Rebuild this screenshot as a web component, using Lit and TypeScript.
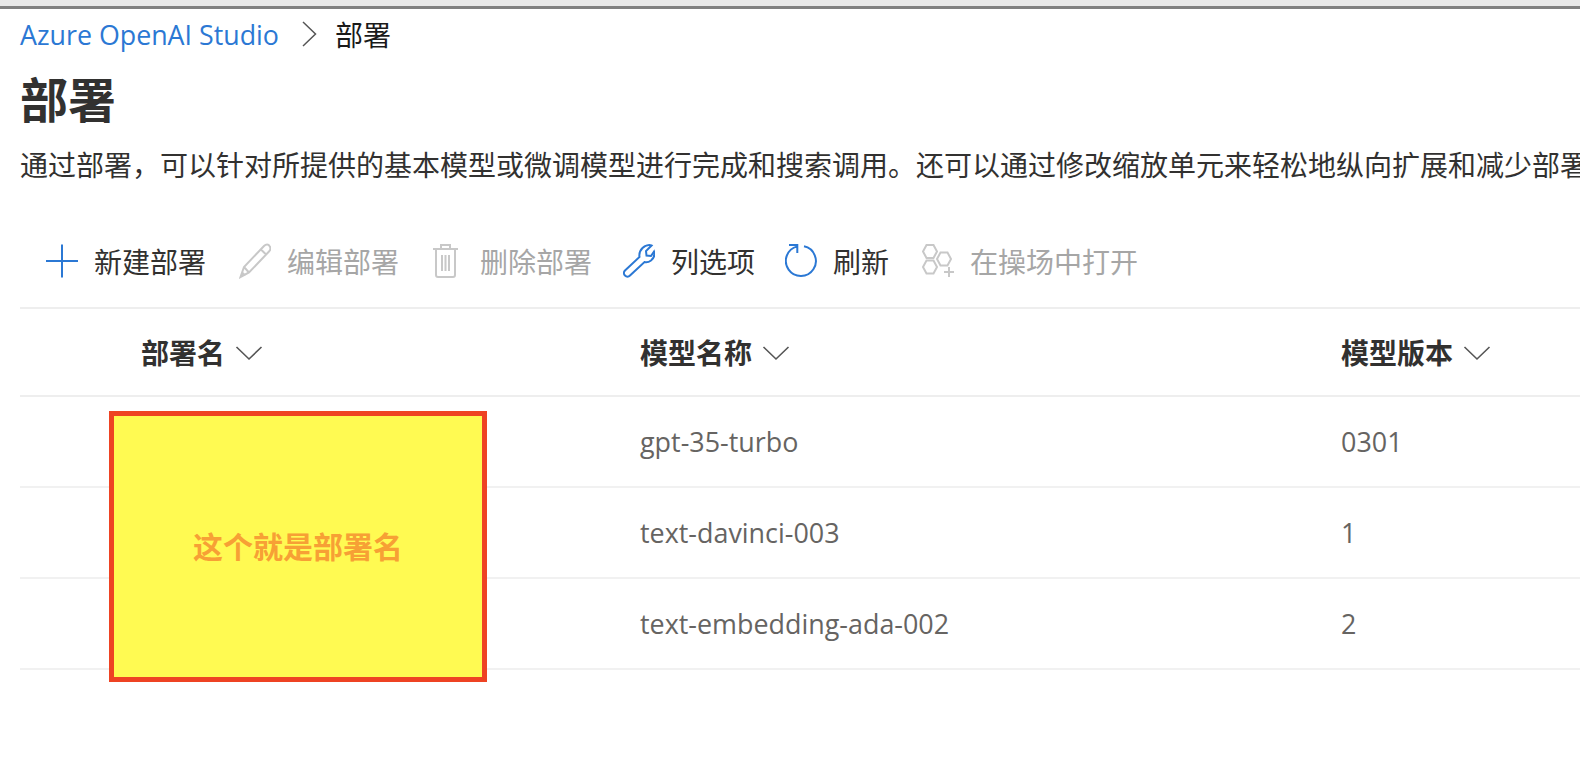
import { LitElement, html, css } from "lit";
import { customElement } from "lit/decorators.js";

const chev = html`<svg class="chev" viewBox="0 0 28 16" width="28" height="16"><path d="M1.500 2 L14 14 L26.500 2" fill="none" stroke="#555" stroke-width="1.600"/></svg>`;

@customElement("app-root")
export class AppRoot extends LitElement {
  static styles = css`
    :host { display: block; position: relative; width: 1580px; height: 770px; overflow: hidden; background: #fff; font-family: "Open Sans", "Noto Sans CJK SC", sans-serif; color: #323130; }
    .chrome { height: 6px; background: #e8e8e8; border-bottom: 3px solid #808080; }
    .content { padding: 0 0 0 20px; }
    .crumb { display: flex; align-items: center; height: 50px; font-size: 26.800px; }
    .crumb a { color: #2b78d4; }
    .crumb svg { margin: 0 18px 0 23px; }
    .crumb .cur { color: #1a1a1a; font-size: 28px; }
    h1 { margin: 0; font-size: 48px; font-weight: 700; line-height: 66px; margin-top: 8px; color: #323130; }
    .desc { font-size: 28px; line-height: 40px; margin-top: 12px; white-space: nowrap; color: #323130; overflow: hidden; width: 1560px; }
    .toolbar { display: flex; align-items: center; height: 92px; margin-top: 30px; padding-left: 26px; gap: 33px; border-bottom: 2px solid #eeeeee; font-size: 28px; }
    .btn { display: flex; align-items: center; gap: 16px; }
    .btn.off { color: #a6a6a6; }
    .btn svg { display: block; }
    .pull2 { margin-left: -2px; }
    .pull3 { margin-left: -3px; }
    .head, .row { display: grid; grid-template-columns: 121px 499px 701px 1fr; }
    .head { height: 86px; align-items: center; border-bottom: 2px solid #eeeeee; font-weight: 700; font-size: 28px; }
    .head .cell { display: flex; align-items: center; gap: 10px; }
    .chev { margin-top: 2px; }
    .row { height: 89px; align-items: center; border-bottom: 2px solid #f1f1f1; font-size: 26.900px; color: #666462; padding-bottom: 0; }
    .note { position: absolute; left: 109px; top: 411px; width: 378px; height: 271px; box-sizing: border-box; border: 5px solid #ee4323; background: #fffa52; display: flex; align-items: center; justify-content: center; color: #f7a035; font-size: 30px; font-weight: 700; font-family: "Noto Sans CJK SC", sans-serif; padding-bottom: 4px; }
  `;

  render() {
    return html`
      <div class="chrome"></div>
      <div class="content">
        <div class="crumb">
          <a>Azure OpenAI Studio</a>
          <svg viewBox="0 0 15 28" width="15" height="28"><path d="M1 2 L13.500 14 L1 26" fill="none" stroke="#555" stroke-width="1.500"/></svg>
          <span class="cur">部署</span>
        </div>
        <h1>部署</h1>
        <div class="desc">通过部署，可以针对所提供的基本模型或微调模型进行完成和搜索调用。还可以通过修改缩放单元来轻松地纵向扩展和减少部署</div>
        <div class="toolbar">
          <div class="btn">
            <svg viewBox="0 0 32 36" width="32" height="36"><path d="M0 18 H32 M16 1.500 V34.500" stroke="#2b78d4" stroke-width="2" fill="none"/></svg>
            <span>新建部署</span>
          </div>
          <div class="btn off">
            <svg viewBox="0 0 32 36" width="32" height="36" fill="none" stroke="#c8c8c8" stroke-width="2"><path d="M1.500 34 L5 24 L25 3 C27 1 29.500 1 30.500 3 C32 5 31.500 7 30 8.500 L10 29.500 Z M5 24 L10 29.500 M22 6.500 L27.500 12"/><path d="M1.500 34 L3.500 28.500 L7 32 Z" fill="#c8c8c8" stroke="none"/></svg>
            <span>编辑部署</span>
          </div>
          <div class="btn off">
            <svg viewBox="0 0 32 36" width="32" height="36" fill="none" stroke="#c8c8c8" stroke-width="2"><path d="M1 6 H26 M9 6 V2 H18 V6 M4 6 V32 Q4 34 6 34 H21 Q23 34 23 32 V6 M10 12 V28 M13.500 12 V28 M17 12 V28"/></svg>
            <span>删除部署</span>
          </div>
          <div class="btn pull2">
            <svg viewBox="0 0 32 36" width="32" height="36" fill="none" stroke="#2b78d4" stroke-width="2"><path d="M19.500 5 C22 2.500 26 1.500 28.500 2.500 L23 8 L23.500 12.500 L28 13 L31 8.500 C32 12 30.500 15.500 28 17.500 C26 19 23.500 19.500 21.500 19 L7 32.500 C5.500 34 3.500 34 2 32.500 C0.500 31 0.500 29 2 27.500 L16.500 14 C16 11 17 7.500 19.500 5 Z"/></svg>
            <span>列选项</span>
          </div>
          <div class="btn pull3">
            <svg viewBox="0 0 32 36" width="32" height="36" fill="none" stroke="#2b78d4" stroke-width="2"><path d="M19 3.300 A15 15 0 1 1 12.300 3.400 M4 2 H12.300 V10"/></svg>
            <span>刷新</span>
          </div>
          <div class="btn off">
            <svg viewBox="0 0 32 36" width="32" height="36" fill="none" stroke="#c8c8c8" stroke-width="2"><path d="M4.500 2 H11.500 L15 8.500 L11.500 15 H4.500 L1 8.500 Z M18.500 9.500 H25.500 L29 16 L25.500 22.500 H18.500 L15 16 Z M4.500 17.500 H11.500 L15 24 L11.500 30.500 H4.500 L1 24 Z M27 24 V34 M22 29 H32.500"/></svg>
            <span>在操场中打开</span>
          </div>
        </div>
        <div class="head">
          <span></span>
          <div class="cell">部署名 ${chev}</div>
          <div class="cell">模型名称 ${chev}</div>
          <div class="cell">模型版本 ${chev}</div>
        </div>
        <div class="row"><span></span><span></span><span>gpt-35-turbo</span><span>0301</span></div>
        <div class="row"><span></span><span></span><span>text-davinci-003</span><span>1</span></div>
        <div class="row"><span></span><span></span><span>text-embedding-ada-002</span><span>2</span></div>
      </div>
      <div class="note">这个就是部署名</div>
    `;
  }
}
